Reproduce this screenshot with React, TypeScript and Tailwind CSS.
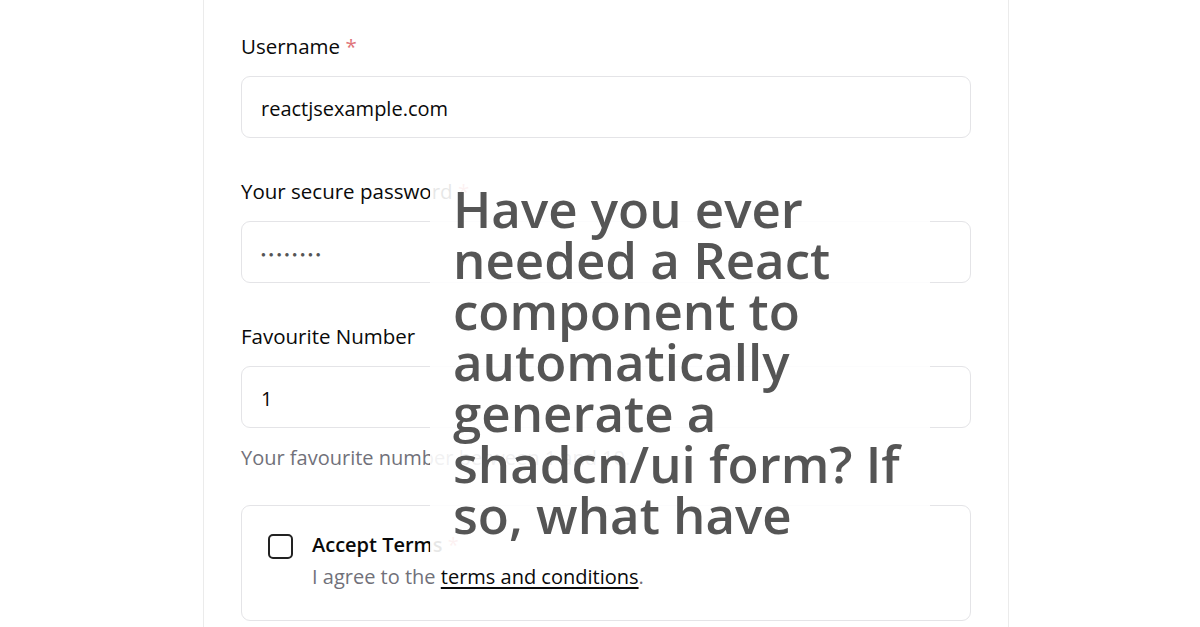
import React from "react";

const Label = ({ children, required }: { children: React.ReactNode; required?: boolean }) => (
  <div className="text-[20.5px] leading-[24px] font-medium text-[#0a0a0a]">
    {children}
    {required && <span className="text-[#e0757a]"> *</span>}
  </div>
);

const Input = ({ children }: { children: React.ReactNode }) => (
  <div className="mt-[18px] h-[62px] w-full rounded-[9px] border border-[#e4e4e7] bg-white px-[19px] pt-[3px] flex items-center text-[20px] text-[#0a0a0a]">
    {children}
  </div>
);

export default function App() {
  return (
    <div className="relative w-[1200px] h-[627px] overflow-hidden bg-white font-['Open_Sans',sans-serif]">
      <div className="ml-[203px] w-[806px] h-full border-x border-[#ebebeb] px-[37px] pt-[34px]">
        <Label required>Username</Label>
        <Input>reactjsexample.com</Input>

        <div className="mt-[41px]">
          <Label required>Your secure password</Label>
          <Input>
            <span className="text-[8px] tracking-[3px] text-[#555]">●●●●●●●●</span>
          </Input>
        </div>

        <div className="mt-[41px]">
          <Label>Favourite Number</Label>
          <Input>1</Input>
          <div className="mt-[18px] text-[20px] leading-[24px] text-[#71717a]">
            Your favourite number between 1 and 10.
          </div>
        </div>

        <div className="mt-[35px] h-[116px] rounded-[9px] border border-[#e4e4e7] flex gap-[19px] pl-[26px] pt-[28px]">
          <div className="w-[25px] h-[25px] rounded-[5px] border-2 border-[#222] shrink-0" />
          <div className="-mt-[1px]">
            <div className="text-[20px] leading-[24px] font-semibold text-[#0a0a0a]">
              Accept Terms<span className="text-[#e0757a] font-medium"> *</span>
            </div>
            <div className="mt-[8px] text-[20px] leading-[24px] text-[#71717a]">
              I agree to the{" "}
              <span className="underline underline-offset-[3px] text-[#0a0a0a]">terms and conditions</span>.
            </div>
          </div>
        </div>
      </div>

      <div className="absolute left-[430px] top-[180px] w-[500px] h-[378px] bg-white/90 pl-[23px] pt-[3px]">
        <div className="text-[51px] leading-[51px] font-semibold text-[#555555]">
          <div>Have you ever</div>
          <div>needed a React</div>
          <div>component to</div>
          <div>automatically</div>
          <div>generate a</div>
          <div>shadcn/ui form? If</div>
          <div>so, what have</div>
        </div>
      </div>
    </div>
  );
}
